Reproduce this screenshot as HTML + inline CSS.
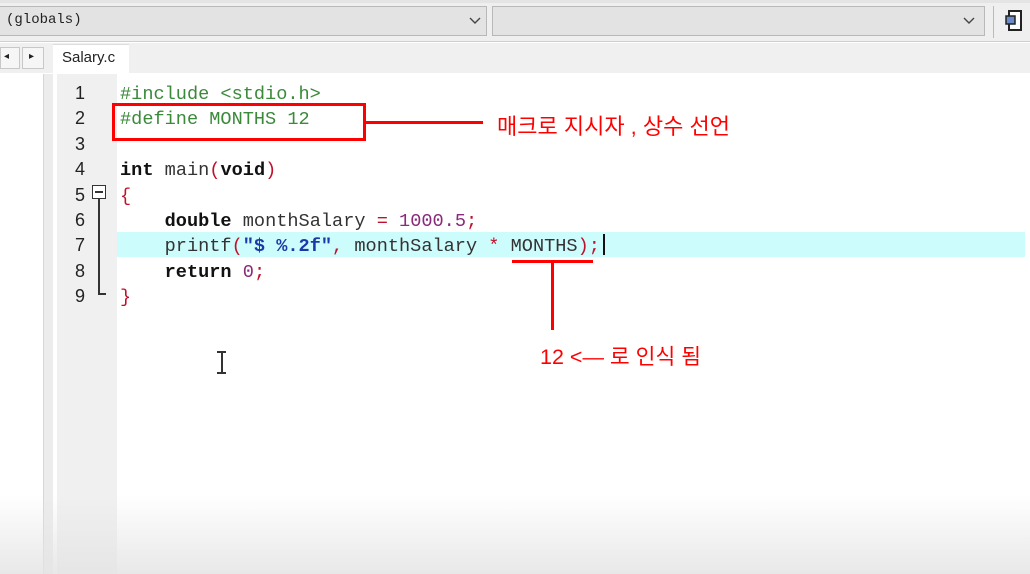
<!DOCTYPE html>
<html><head><meta charset="utf-8"><style>
*{margin:0;padding:0;box-sizing:border-box}
body{width:1030px;height:574px;overflow:hidden;background:#fff;position:relative;font-family:"Liberation Sans",sans-serif}
.a{position:absolute}
.code{font-family:"Liberation Mono",monospace;font-size:18.6px;white-space:pre;line-height:25.4px}
.pp{color:#3a8a3a}.kw{color:#111;font-weight:bold}.id{color:#333}.p{color:#c0102a}.n{color:#8a2a7a}.s{color:#1a3aa8;font-weight:bold}
.ln{font-family:"Liberation Sans",sans-serif;font-size:18px;color:#222;text-align:right;width:30px;line-height:25.4px}
.red{background:#f00}
.lab{color:#f00;font-family:"Liberation Sans","Noto Sans CJK KR",sans-serif;font-size:22px;white-space:nowrap}
</style></head><body>
<div class="a" style="left:0;top:0;width:1030px;height:42px;background:#efefef;border-bottom:1px solid #cfcfcf"></div>
<div class="a" style="left:0;top:0;width:1030px;height:3px;background:#e4e4e4"></div>
<div class="a" style="left:-2px;top:6px;width:489px;height:30px;background:#e3e3e3;border:1px solid #b8b8b8"></div>
<div class="a code" style="left:6px;top:8px;font-size:14px;color:#222">(globals)</div>
<svg class="a" style="left:468px;top:16px" width="14" height="10"><path d="M2 2 L7 7 L12 2" stroke="#444" stroke-width="1.4" fill="none"/></svg>
<div class="a" style="left:492px;top:6px;width:493px;height:30px;background:#e3e3e3;border:1px solid #b8b8b8"></div>
<svg class="a" style="left:962px;top:16px" width="14" height="10"><path d="M2 2 L7 7 L12 2" stroke="#444" stroke-width="1.4" fill="none"/></svg>
<div class="a" style="left:993px;top:6px;width:1px;height:32px;background:#bbb"></div>
<svg class="a" style="left:1004px;top:8px" width="22" height="26"><rect x="5" y="3" width="12" height="19" fill="#fff" stroke="#222" stroke-width="2"/><rect x="2" y="8" width="9" height="8" fill="#6a8ac8" stroke="#222" stroke-width="1.5"/></svg>
<div class="a" style="left:0;top:43px;width:1030px;height:30px;background:#f0f0f0"></div>
<div class="a" style="left:0;top:47px;width:20px;height:22px;background:#f6f6f6;border:1px solid #c8c8c8"></div>
<div class="a" style="left:22px;top:47px;width:22px;height:22px;background:#f6f6f6;border:1px solid #c8c8c8"></div>
<div class="a" style="left:4px;top:51px;font-size:10px;color:#222">◂</div>
<div class="a" style="left:29px;top:51px;font-size:10px;color:#222">▸</div>
<div class="a" style="left:53px;top:44px;width:76px;height:30px;background:#fff;border-top:1px solid #ddd"></div>
<div class="a" style="left:62px;top:49px;font-size:15px;color:#222">Salary.c</div>
<div class="a" style="left:43px;top:74px;width:10px;height:500px;background:#ececec;border-left:1px solid #d6d6d6"></div>
<div class="a" style="left:57px;top:74px;width:60px;height:500px;background:#f0f0f0"></div>
<div class="a" style="left:117px;top:232px;width:908px;height:25px;background:#cdfcfc"></div>
<div class="a ln" style="left:55px;top:81px">1<br>2<br>3<br>4<br>5<br>6<br>7<br>8<br>9</div>
<div class="a" style="left:92px;top:185px;width:14px;height:14px;border:1.5px solid #333;background:#fff"></div>
<div class="a" style="left:95px;top:191px;width:8px;height:1.5px;background:#333"></div>
<div class="a" style="left:98px;top:199px;width:1.5px;height:95px;background:#333"></div>
<div class="a" style="left:98px;top:293px;width:8px;height:1.5px;background:#333"></div>
<div class="a code" style="left:120px;top:82px"><span class="pp">#include &lt;stdio.h&gt;</span>
<span class="pp">#define MONTHS 12</span>

<span class="kw">int</span> <span class="id">main</span><span class="p">(</span><span class="kw">void</span><span class="p">)</span>
<span class="p">{</span>
    <span class="kw">double</span> <span class="id">monthSalary</span> <span class="p">=</span> <span class="n">1000.5</span><span class="p">;</span>
    <span class="id">printf</span><span class="p">(</span><span class="s">"$ %.2f"</span><span class="p">,</span> <span class="id">monthSalary</span> <span class="p">*</span> <span class="id">MONTHS</span><span class="p">);</span>
    <span class="kw">return</span> <span class="n">0</span><span class="p">;</span>
<span class="p">}</span></div>
<div class="a" style="left:603px;top:234px;width:2px;height:21px;background:#111"></div>
<div class="a" style="left:221px;top:351px;width:1.5px;height:22px;background:#333"></div>
<div class="a" style="left:217px;top:351px;width:9px;height:1.5px;background:#333"></div>
<div class="a" style="left:217px;top:372px;width:9px;height:1.5px;background:#333"></div>
<div class="a" style="left:0;top:495px;width:1030px;height:79px;background:linear-gradient(rgba(230,230,230,0),rgba(228,228,228,.85))"></div>
<div class="a" style="left:112px;top:103px;width:254px;height:38px;border:3px solid #f00"></div>
<div class="a red" style="left:366px;top:121px;width:117px;height:3px"></div>
<div class="a lab" style="left:497px;top:109px">매크로 지시자 , 상수 선언</div>
<div class="a red" style="left:512px;top:260px;width:81px;height:3px"></div>
<div class="a red" style="left:551px;top:262px;width:3px;height:68px"></div>
<div class="a lab" style="left:540px;top:340px;font-size:21.5px">12 &lt;— 로 인식 됨</div>
</body></html>
